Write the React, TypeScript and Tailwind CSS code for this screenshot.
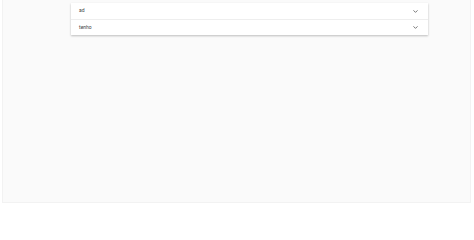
import React from "react";

function Chevron() {
  return (
    <svg width="7" height="7" viewBox="0 0 24 24" fill="none" stroke="#666666" strokeWidth="3" strokeLinecap="round" strokeLinejoin="round">
      <path d="M6 9l6 6 6-6" />
    </svg>
  );
}

export default function App() {
  const items = ["ad", "tenho"];
  return (
    <div className="w-[474px] h-[207px] bg-white pl-[2px] font-['Roboto',sans-serif]">
      <div className="w-[469px] h-[203px] bg-[#fafafa] border-x border-b border-[#f2f2f2] pl-[68px] pt-[3px]">
        <div className="w-[357px] bg-white shadow-[0_1px_2px_rgba(0,0,0,0.25)]">
          {items.map((t, i) => (
            <div
              key={t}
              className={`h-[16px] flex items-center justify-between pl-[8px] pr-[9px] ${i > 0 ? "border-t border-[#eeeeee]" : ""}`}
            >
              <span className="text-[5px] text-[#444]">{t}</span>
              <Chevron />
            </div>
          ))}
        </div>
      </div>
    </div>
  );
}
